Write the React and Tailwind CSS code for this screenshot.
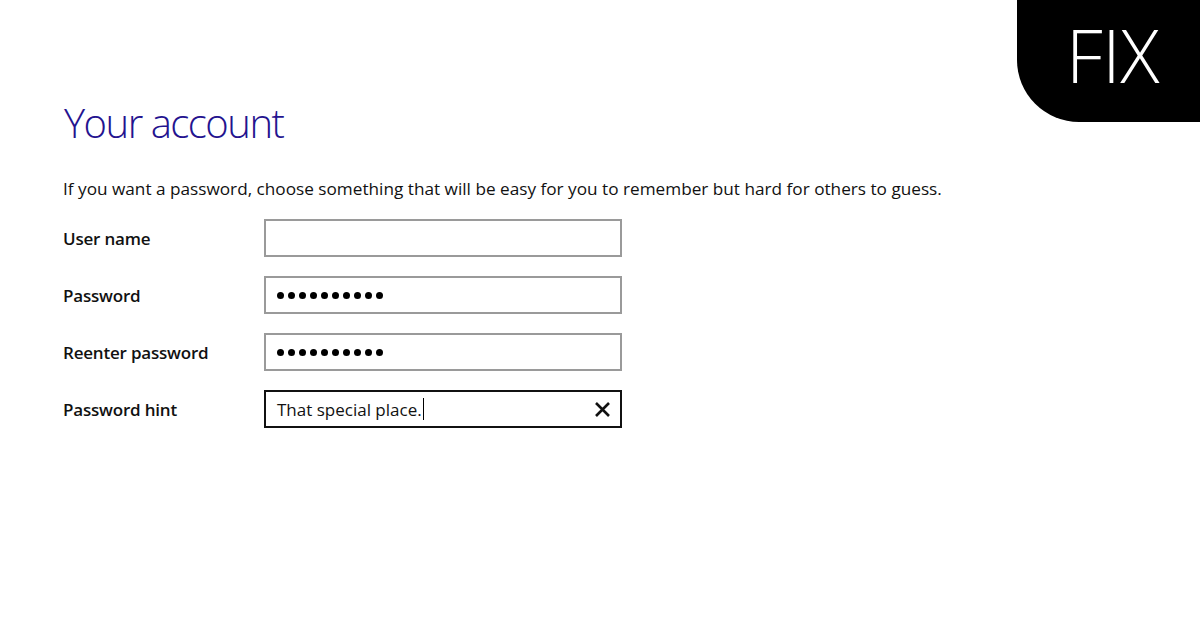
import React from 'react';

const Dots = ({ count = 10 }) => (
  <div className="flex items-center gap-[4px]">
    {Array.from({ length: count }).map((_, i) => (
      <span key={i} className="block w-[7px] h-[7px] rounded-full bg-black" />
    ))}
  </div>
);

const Field = ({ label, children, active }) => (
  <div className="flex items-center h-[38px]">
    <div className="w-[201px] text-[17px] font-semibold text-[#111] tracking-[-0.2px] pt-[2px]">{label}</div>
    <div
      className={`w-[358px] h-[38px] flex items-center px-[11px] border-2 ${
        active ? 'border-[#111]' : 'border-[#9a9a9a]'
      } bg-white`}
    >
      {children}
    </div>
  </div>
);

export default function App() {
  return (
    <div
      className="w-[1200px] h-[627px] bg-white flex overflow-hidden"
      style={{ fontFamily: '"Open Sans", "Noto Sans", sans-serif' }}
    >
      <div className="flex-1 pl-[63px] pt-[103px]">
        <h1 className="text-[40px] font-light text-[#24138f] leading-none pl-[1px] tracking-[-1.5px]">
          Your account
        </h1>
        <p className="mt-[37px] text-[17.2px] text-[#111] leading-none">
          If you want a password, choose something that will be easy for you to remember but hard for others to guess.
        </p>
        <div className="mt-[22px] flex flex-col gap-[19px]">
          <Field label="User name" />
          <Field label="Password">
            <Dots />
          </Field>
          <Field label="Reenter password">
            <Dots />
          </Field>
          <Field label="Password hint" active>
            <span className="text-[17px] text-[#111] leading-none">That special place.</span>
            <span className="w-[1px] h-[22px] bg-black ml-[1px]" />
            <svg className="ml-auto mr-[-2px]" width="17" height="17" viewBox="0 0 17 17">
              <path d="M2 2 L15 15 M15 2 L2 15" stroke="#111" strokeWidth="2.6" fill="none" />
            </svg>
          </Field>
        </div>
      </div>
      <div className="w-[183px] h-[122px] bg-black rounded-bl-[62px] flex items-start justify-center pl-[8px] pt-[18px]">
        <span className="text-white text-[73px] font-light leading-none tracking-[-0.5px]">FIX</span>
      </div>
    </div>
  );
}
